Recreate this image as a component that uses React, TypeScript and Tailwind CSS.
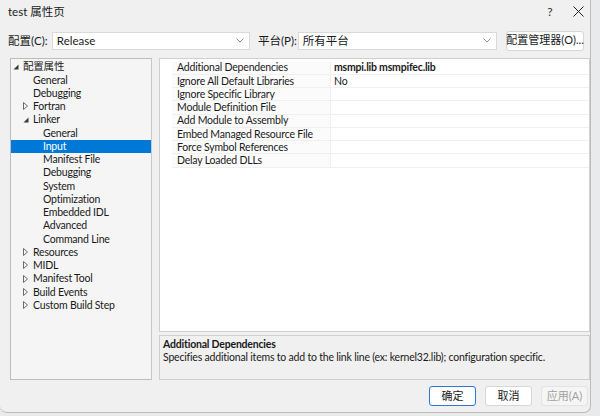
import React from "react";

const FONT = { fontFamily: '"Segoe UI", Lato, "Noto Sans CJK SC", sans-serif' };

type Node = { label: string; level: number; arrow?: "open" | "closed"; selected?: boolean };

const tree: Node[] = [
  { label: "配置属性", level: 0, arrow: "open" },
  { label: "General", level: 1 },
  { label: "Debugging", level: 1 },
  { label: "Fortran", level: 1, arrow: "closed" },
  { label: "Linker", level: 1, arrow: "open" },
  { label: "General", level: 2 },
  { label: "Input", level: 2, selected: true },
  { label: "Manifest File", level: 2 },
  { label: "Debugging", level: 2 },
  { label: "System", level: 2 },
  { label: "Optimization", level: 2 },
  { label: "Embedded IDL", level: 2 },
  { label: "Advanced", level: 2 },
  { label: "Command Line", level: 2 },
  { label: "Resources", level: 1, arrow: "closed" },
  { label: "MIDL", level: 1, arrow: "closed" },
  { label: "Manifest Tool", level: 1, arrow: "closed" },
  { label: "Build Events", level: 1, arrow: "closed" },
  { label: "Custom Build Step", level: 1, arrow: "closed" },
];

const props: [string, string, boolean][] = [
  ["Additional Dependencies", "msmpi.lib msmpifec.lib", true],
  ["Ignore All Default Libraries", "No", false],
  ["Ignore Specific Library", "", false],
  ["Module Definition File", "", false],
  ["Add Module to Assembly", "", false],
  ["Embed Managed Resource File", "", false],
  ["Force Symbol References", "", false],
  ["Delay Loaded DLLs", "", false],
];

function Arrow({ kind }: { kind: "open" | "closed" }) {
  if (kind === "open") {
    return (
      <svg width="6" height="6" viewBox="0 0 6 6">
        <path d="M5.5 0.5 L5.5 5.5 L0.5 5.5 Z" fill="#3b3b3b" />
      </svg>
    );
  }
  return (
    <svg width="5" height="8" viewBox="0 0 5 8">
      <path d="M0.5 0.5 L4.5 4 L0.5 7.5 Z" fill="none" stroke="#6b6b6b" strokeWidth="1" />
    </svg>
  );
}

function Combo({ value, width }: { value: string; width: string }) {
  return (
    <div className={`${width} h-[18px] bg-white border border-[#d9d9d9] flex items-center justify-between pl-[4px] pr-[5px]`}>
      <span className="text-[11.5px] text-[#1a1a1a] whitespace-nowrap">{value}</span>
      <svg width="8" height="5" viewBox="0 0 8 5">
        <path d="M0.5 0.5 L4 4 L7.5 0.5" fill="none" stroke="#8a8a8a" strokeWidth="0.9" />
      </svg>
    </div>
  );
}

export default function App() {
  return (
    <div className="w-[600px] h-[416px] bg-[#e9eaec] overflow-hidden" style={FONT}>
      <div className="w-[591px] h-[413px] bg-[#f0f0f0] rounded-b-[7px] border-r border-b border-[#bdbdbd] flex flex-col text-[#1a1a1a] whitespace-nowrap">
        {/* title bar */}
        <div className="h-[23px] flex items-center justify-between pl-[8px] pr-[4px]">
          <span className="text-[11.5px]">test 属性页</span>
          <div className="flex items-center">
            <span className="text-[12px] w-[30px] text-center mr-[8px] text-[#333]">?</span>
            <svg width="11" height="11" viewBox="0 0 11 11" className="mr-[2px]">
              <path d="M0.5 0.5 L10.5 10.5 M10.5 0.5 L0.5 10.5" stroke="#222" strokeWidth="1" />
            </svg>
          </div>
        </div>

        {/* config row */}
        <div className="h-[35px] flex items-center pl-[8px] pr-[6px] text-[11.5px]">
          <span className="w-[44px]">配置(C):</span>
          <Combo value="Release" width="w-[199px]" />
          <span className="ml-[8px] w-[40px]">平台(P):</span>
          <Combo value="所有平台" width="w-[200px]" />
          <div className="ml-[9px] w-[78px] h-[20px] bg-white border border-[#d6d6d6] rounded-[3px] flex items-center justify-center text-[11px]">
            配置管理器(O)...
          </div>
        </div>

        {/* main */}
        <div className="flex gap-[7px] pl-[10px] h-[322px] text-[10.5px] tracking-[-0.2px]">
          <div className="w-[142px] bg-[#f5f5f5] border border-[#bcbcbc] border-r-[#c8c8c8] pt-[1px]">
            {tree.map((n, i) => (
              <div
                key={i}
                className={`h-[13.25px] flex items-center leading-none ${n.selected ? "bg-[#0078d7] text-white" : ""}`}
                style={{ paddingLeft: 2 + n.level * 10 }}
              >
                <span className="w-[8px] flex items-center">{n.arrow && <Arrow kind={n.arrow} />}</span>
                <span className="ml-[2px]">{n.label}</span>
              </div>
            ))}
          </div>

          <div className="flex-1 flex flex-col gap-[3px]">
            <div className="h-[275px] bg-white border border-[#cfcfcf] pt-[2.5px]">
              {props.map(([k, v, b], i) => (
                <div key={i} className="h-[13.25px] flex items-center leading-none">
                  <div className="w-[12px] h-full bg-white" />
                  <div className="w-[158px] h-full flex items-center pl-[5px] border-b border-[#f0f0f0] bg-[#fbfbfb]">
                    {k}
                  </div>
                  <div className={`flex-1 h-full flex items-center pl-[3px] border-b border-l border-[#f0f0f0] ${b ? "font-bold" : ""}`}>
                    {v}
                  </div>
                </div>
              ))}
            </div>
            <div className="h-[45px] bg-[#f0f0f0] border border-[#cfcfcf] px-[3px] pt-[2px] leading-[13px]">
              <div className="font-bold">Additional Dependencies</div>
              <div>Specifies additional items to add to the link line (ex: kernel32.lib); configuration specific.</div>
            </div>
          </div>
        </div>

        {/* buttons */}
        <div className="flex justify-end gap-[9px] pr-[2px] pt-[6px] text-[11px]">
          <div className="w-[47px] h-[20px] bg-white border border-[#2a7ad3] rounded-[3px] flex items-center justify-center">确定</div>
          <div className="w-[47px] h-[20px] bg-white border border-[#d6d6d6] rounded-[3px] flex items-center justify-center">取消</div>
          <div className="w-[47px] h-[20px] bg-[#f5f5f5] border border-[#e3e3e3] rounded-[3px] flex items-center justify-center text-[#a0a0a0]">应用(A)</div>
        </div>
      </div>
    </div>
  );
}
